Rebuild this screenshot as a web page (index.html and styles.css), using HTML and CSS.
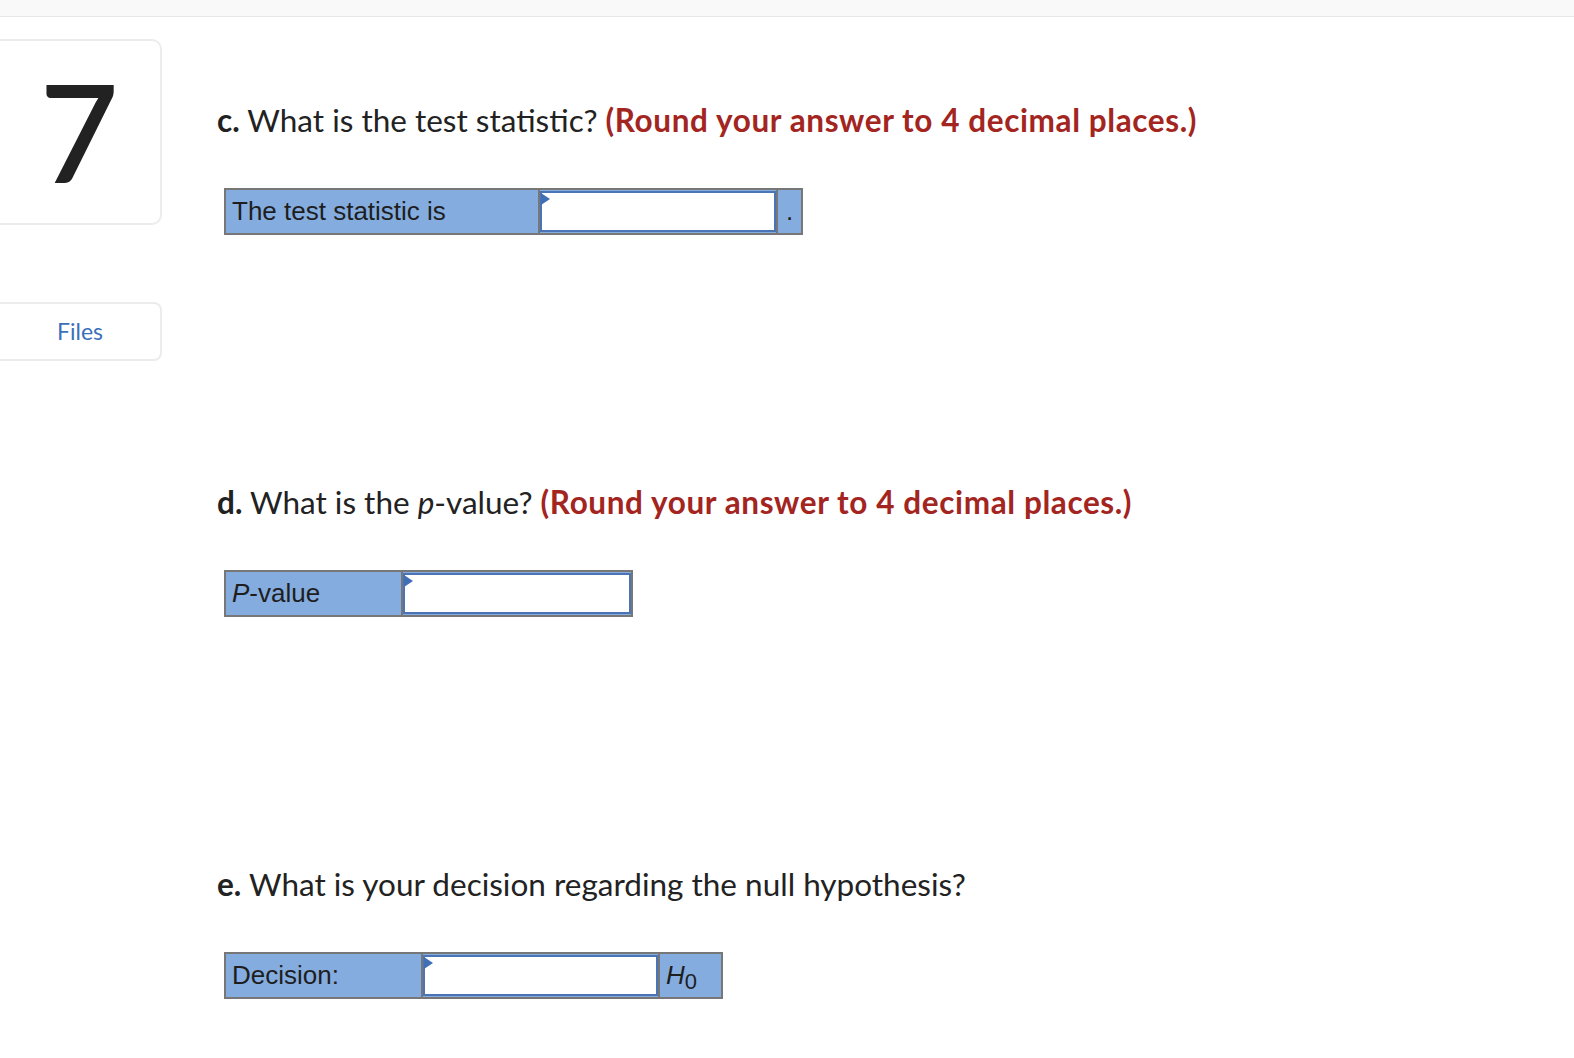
FILE: index.html
```html
<!DOCTYPE html>
<html>
<head>
<meta charset="utf-8">
<link rel="stylesheet" href="styles.css">
</head>
<body>
<div class="topbar"></div>
<div class="page">
  <aside class="side">
    <div class="qnum">7</div>
    <div class="files">Files</div>
  </aside>
  <main class="content">
    <section class="part">
      <p class="question"><b>c.</b> What is the test statistic? <span class="hint">(Round your answer to 4 decimal places.)</span></p>
      <div class="ans">
        <div class="label w1">The test statistic is</div>
        <div class="field w1i"><span class="tri"></span></div>
        <div class="suffix dot">.</div>
      </div>
    </section>
    <section class="part">
      <p class="question"><b>d.</b> What is the <i>p</i>-value? <span class="hint">(Round your answer to 4 decimal places.)</span></p>
      <div class="ans">
        <div class="label w2"><i>P</i>-value</div>
        <div class="field w2i"><span class="tri"></span></div>
      </div>
    </section>
    <section class="part last">
      <p class="question"><b>e.</b> What is your decision regarding the null hypothesis?</p>
      <div class="ans">
        <div class="label w3">Decision:</div>
        <div class="field w3i"><span class="tri"></span></div>
        <div class="suffix h0"><i>H</i><sub>0</sub></div>
      </div>
    </section>
  </main>
</div>
</body>
</html>
```
FILE: styles.css
```css
html, body {
  margin: 0;
  padding: 0;
  background: #ffffff;
}
body {
  font-family: Lato, "Liberation Sans", sans-serif;
  color: #222222;
}
.topbar {
  height: 16px;
  background: #f9f9f9;
  border-bottom: 1px solid #e8e8e8;
}
.page {
  display: flex;
  align-items: flex-start;
}
.side {
  width: 162px;
  flex: none;
  display: flex;
  flex-direction: column;
}
.qnum {
  margin-top: 22px;
  height: 186px;
  box-sizing: border-box;
  border: 2px solid #ececec;
  border-left: none;
  border-radius: 0 10px 10px 0;
  font-size: 134px;
  line-height: 180px;
  text-align: center;
  color: #222222;
  padding-right: 2px;
  -webkit-text-stroke: 2px #222222;
}
.files {
  margin-top: 77px;
  height: 59px;
  box-sizing: border-box;
  border: 2px solid #ececec;
  border-left: none;
  border-radius: 0 8px 8px 0;
  color: #3b6fba;
  font-size: 23px;
  line-height: 55px;
  text-align: center;
}
.content {
  padding-left: 55px;
  padding-top: 83px;
}
.part {
  height: 382px;
}
.part.last {
  height: auto;
}
.question {
  margin: 0;
  font-size: 31.5px;
  line-height: 41px;
  white-space: nowrap;
  color: #222222;
}
.question b {
  font-weight: 700;
}
.hint {
  color: #a3251f;
  font-weight: 700;
  letter-spacing: 0.6px;
}
.ans {
  margin-top: 47px;
  margin-left: 7px;
  display: inline-flex;
  height: 47px;
  box-sizing: border-box;
  border: 2px solid #777777;
  background: #84acdf;
  font-family: "Liberation Sans", Arial, sans-serif;
  font-size: 26px;
  color: #1e1e1e;
}
.label {
  box-sizing: border-box;
  padding-left: 6px;
  line-height: 43px;
  border-right: 2px solid #777777;
}
.field {
  position: relative;
  box-sizing: border-box;
  background: #ffffff;
  border: 2px solid #4a74b6;
  margin: 1px 0;
}
.tri {
  position: absolute;
  left: -1px;
  top: 0;
  width: 0;
  height: 0;
  border-top: 6px solid transparent;
  border-bottom: 6px solid transparent;
  border-left: 9px solid #3f6fb6;
}
.suffix {
  box-sizing: border-box;
  border-left: 2px solid #777777;
  line-height: 43px;
}
.w1 { width: 314px; }
.w1i { width: 236px; }
.dot { width: 25px; text-align: center; }
.w2 { width: 177px; }
.w2i { width: 228px; }
.w3 { width: 197px; }
.w3i { width: 235px; }
.h0 { width: 63px; padding-left: 6px; }
.h0 sub {
  font-size: 22px;
  vertical-align: -5px;
}
```
